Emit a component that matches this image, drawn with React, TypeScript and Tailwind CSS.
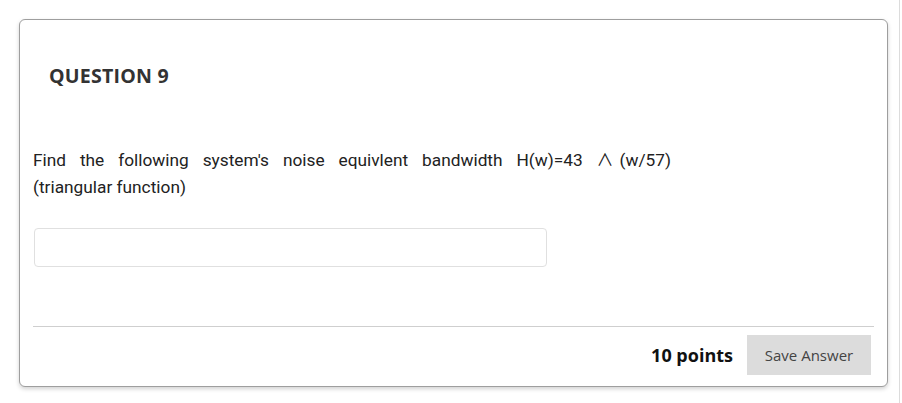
import React from 'react';

const App = () => {
  return (
    <div className="w-[902px] h-[403px] bg-white overflow-hidden flex">
      {/* Page area with a thin edge on the right */}
      <div className="w-[900px] h-[403px] border-r border-[#dcdcdc] pt-[19px] pl-[19px]">
        {/* Question card */}
        <div className="w-[869px] h-[368px] border border-[#9e9e9e] rounded-[6px] shadow-[0_2px_4px_rgba(0,0,0,0.18)] bg-white flex flex-col px-[13px]">
          <h2
            className="pt-[42px] pl-[16px] text-[19.6px] leading-[28px] font-bold text-[#333] tracking-[0.2px]"
            style={{ fontFamily: '"Open Sans", sans-serif' }}
          >
            QUESTION 9
          </h2>

          {/* Question text */}
          <div
            className="mt-[57px] w-[638px] text-[17.3px] leading-[27px] text-[#222] text-justify"
            style={{ fontFamily: 'Roboto, sans-serif' }}
          >
            <span className="block [text-align-last:justify]">
              Find the following system's noise equivlent bandwidth H(w)=43{' '}
              <span
                className="inline-block mr-[6px] text-[17px] leading-none"
                style={{ fontFamily: '"Noto Sans CJK JP", sans-serif' }}
              >
                ∧
              </span>
              (w/57)
            </span>
            <span className="block">(triangular function)</span>
          </div>

          {/* Answer field */}
          <input
            type="text"
            className="mt-[27px] ml-[1px] w-[513px] h-[39px] border border-[#e0e0e0] rounded-[4px] bg-white outline-none"
          />

          {/* Footer */}
          <div className="mt-[59px] border-t border-[#cfcfcf] pt-[8px] flex items-center justify-end gap-[14px] pr-[3px]">
            <span
              className="text-[18px] font-bold text-[#111]"
              style={{ fontFamily: '"Open Sans", sans-serif' }}
            >
              10 points
            </span>
            <button
              className="w-[124px] h-[40px] bg-[#dcdcdc] text-[#444] text-[15px]"
              style={{ fontFamily: '"Open Sans", sans-serif' }}
            >
              Save Answer
            </button>
          </div>
        </div>
      </div>
    </div>
  );
};

export default App;
